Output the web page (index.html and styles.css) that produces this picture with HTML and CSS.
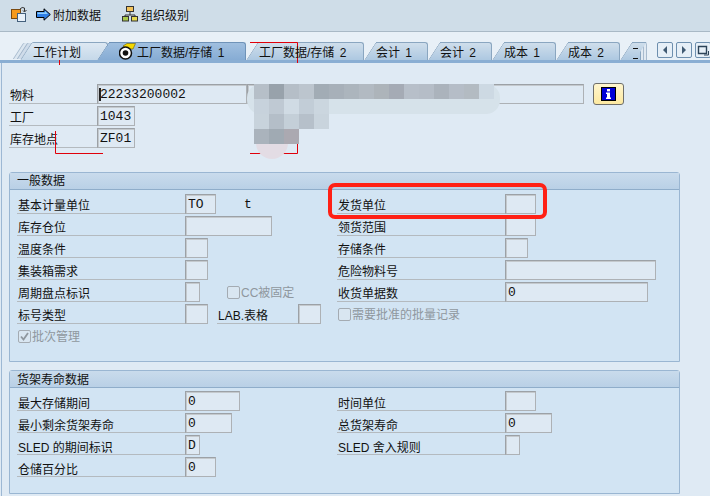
FILE: index.html
```html
<!DOCTYPE html>
<html lang="zh">
<head>
<meta charset="utf-8">
<title>物料</title>
<link rel="stylesheet" href="styles.css">
</head>
<body>
<div class="page">
  <header class="toolbar">
    <svg class="icon-a" width="16" height="16" viewBox="0 0 16 16"><rect x="0.5" y="3.5" width="9" height="9" fill="#f59a1e" stroke="#7a4a10"/><rect x="6.5" y="7.5" width="8" height="8" fill="#e8f1fa" stroke="#44607c"/><path d="M9 3 Q11 0.5 13.5 2 L13.5 5.5 M12 4.5 L13.5 6 L15.5 4" fill="none" stroke="#333" stroke-width="1"/></svg>
    <svg class="icon-b" width="15" height="13" viewBox="0 0 15 13"><path d="M0.5 3.5 H8 V0.8 L14.3 6.5 L8 12.2 V9.5 H0.5 Z" fill="#2f7fe6" stroke="#000"/><path d="M1.5 4.5 H9 V3 L12 6 H1.5 Z" fill="#8fd0ff"/></svg>
    <span class="tool-text">附加数据</span>
    <svg class="icon-c" width="16" height="16" viewBox="0 0 16 16"><path d="M8 5 V9 M3 12 V9 H13 V12" fill="none" stroke="#333"/><rect x="4.5" y="0.5" width="7" height="5" fill="#f3c35a" stroke="#333"/><rect x="0.5" y="10.5" width="6" height="4.5" fill="#a9c94a" stroke="#333"/><rect x="9.5" y="10.5" width="6" height="4.5" fill="#e6d94f" stroke="#333"/></svg>
    <span class="tool-text">组织级别</span>
  </header>

  <nav class="tabstrip">
    <div class="tab tab-plan"><span>工作计划</span></div>
    <div class="tab tab-active">
      <svg class="tab-icon" width="17" height="17" viewBox="0 0 17 17"><path d="M4 3 L8 0.5 H16.5 L14 6 H8 Z" fill="#f5d800" stroke="#6b6000" stroke-width="0.6"/><circle cx="6.5" cy="10" r="6" fill="#fff" stroke="#111" stroke-width="1.5"/><circle cx="6.5" cy="10" r="2.8" fill="#111"/></svg>
      <span>工厂数据/存储 1</span>
    </div>
    <div class="tab tab-plant2"><span>工厂数据/存储 2</span></div>
    <div class="tab tab-std"><span>会计 1</span></div>
    <div class="tab tab-std"><span>会计 2</span></div>
    <div class="tab tab-std"><span>成本 1</span></div>
    <div class="tab tab-std"><span>成本 2</span></div>
    <div class="tab tab-more"><i class="dash"></i><i class="dash"></i></div>
    <div class="scrollers">
      <div class="scroll-btn"><svg width="14" height="14" viewBox="0 0 14 14"><path d="M9 3 V11 L5 7 Z" fill="#405a73"/></svg></div>
      <div class="scroll-btn"><svg width="14" height="14" viewBox="0 0 14 14"><path d="M5 3 V11 L9 7 Z" fill="#405a73"/></svg></div>
      <div class="scroll-btn"><svg width="14" height="14" viewBox="0 0 14 14"><path d="M2.5 3.5 H10.5 V10.5 H2.5 Z" fill="none" stroke="#2c4358" stroke-width="1.4"/><path d="M8 12 H12.5 V8" fill="none" stroke="#2c4358"/></svg></div>
    </div>
  </nav>

  <main class="content">
    <section class="head">
      <div class="head-row">
        <div class="head-label">物料</div>
        <div class="field mono w-material"><b class="caret"></b>22233200002</div>
        <div class="field w-desc"></div>
        <button class="info-btn" type="button" aria-label="i">
          <svg width="15" height="14" viewBox="0 0 15 14"><rect x="0.5" y="0.5" width="14" height="13" fill="#0000d8" stroke="#000"/><rect x="6" y="2" width="3" height="2.4" fill="#fff"/><path d="M5 5.5 H9 V10.5 H10 V12 H5 V10.5 H6 V7 H5 Z" fill="#fff"/></svg>
        </button>
      </div>
      <div class="head-row">
        <div class="head-label">工厂</div>
        <div class="field mono w-38">1043</div>
      </div>
      <div class="head-row">
        <div class="head-label">库存地点</div>
        <div class="field mono w-38">ZF01</div>
      </div>
    </section>

    <section class="group group-general">
      <h2 class="group-title">一般数据</h2>
      <div class="group-body">
        <div class="row">
          <div class="col">
            <div class="label">基本计量单位</div><div class="field mono w-31">TO</div><span class="unit">t</span>
          </div>
          <div class="col col-r">
            <div class="label">发货单位</div><div class="field w-31"></div>
          </div>
        </div>
        <div class="row">
          <div class="col"><div class="label">库存仓位</div><div class="field w-87"></div></div>
          <div class="col col-r"><div class="label">领货范围</div><div class="field w-31"></div></div>
        </div>
        <div class="row">
          <div class="col"><div class="label">温度条件</div><div class="field w-23"></div></div>
          <div class="col col-r"><div class="label">存储条件</div><div class="field w-23"></div></div>
        </div>
        <div class="row">
          <div class="col"><div class="label">集装箱需求</div><div class="field w-23"></div></div>
          <div class="col col-r"><div class="label">危险物料号</div><div class="field w-151"></div></div>
        </div>
        <div class="row">
          <div class="col">
            <div class="label">周期盘点标识</div><div class="field w-15"></div>
            <label class="check check-cc"><i class="box"></i><span>CC被固定</span></label>
          </div>
          <div class="col col-r"><div class="label">收货单据数</div><div class="field mono w-143">0</div></div>
        </div>
        <div class="row">
          <div class="col">
            <div class="label">标号类型</div><div class="field w-23"></div>
            <div class="label label-lab">LAB.表格</div><div class="field w-23"></div>
          </div>
          <div class="col col-r"><label class="check"><i class="box"></i><span>需要批准的批量记录</span></label></div>
        </div>
        <div class="row">
          <div class="col">
            <label class="check">
              <i class="box"><svg width="11" height="11" viewBox="0 0 11 11"><path d="M2 5.5 L4.5 8.5 L9 2" fill="none" stroke="#8f979e" stroke-width="1.8"/></svg></i>
              <span>批次管理</span>
            </label>
          </div>
        </div>
      </div>
    </section>

    <section class="group group-shelf">
      <h2 class="group-title">货架寿命数据</h2>
      <div class="group-body">
        <div class="row">
          <div class="col"><div class="label">最大存储期间</div><div class="field mono w-55">0</div></div>
          <div class="col col-r"><div class="label">时间单位</div><div class="field w-31"></div></div>
        </div>
        <div class="row">
          <div class="col"><div class="label">最小剩余货架寿命</div><div class="field mono w-47">0</div></div>
          <div class="col col-r"><div class="label">总货架寿命</div><div class="field mono w-47">0</div></div>
        </div>
        <div class="row">
          <div class="col"><div class="label">SLED 的期间标识</div><div class="field mono w-15">D</div></div>
          <div class="col col-r"><div class="label">SLED 舍入规则</div><div class="field w-15"></div></div>
        </div>
        <div class="row">
          <div class="col"><div class="label">仓储百分比</div><div class="field mono w-31">0</div></div>
        </div>
      </div>
    </section>
  </main>

  <svg class="overlay" width="710" height="496" viewBox="0 0 710 496">
    <g fill="none" stroke="#e0000a" stroke-width="1">
      <path d="M105 46.5 H59.5 V65"/>
      <path d="M250 42.5 H297.5 V63"/>
      <path d="M55.5 131 V153.5 H103"/>
      <path d="M250 153.5 H297.5 V140"/>
    </g>
    <circle cx="272" cy="143" r="16" fill="#e3dce4"/>
    <rect x="247" y="84" width="253" height="30" rx="14" fill="#d6e2ea"/>
    <g>
      <rect x="254" y="84" width="15" height="15" fill="#b6bfc8"/>
      <rect x="269" y="84" width="15" height="15" fill="#98a2ab"/>
      <rect x="284" y="84" width="15" height="15" fill="#b5bec7"/>
      <rect x="299" y="84" width="15" height="15" fill="#bcc5ce"/>
      <rect x="314" y="84" width="15" height="15" fill="#a2acb5"/>
      <rect x="329" y="84" width="15" height="15" fill="#a7b0b9"/>
      <rect x="344" y="84" width="15" height="15" fill="#acb5bd"/>
      <rect x="359" y="84" width="15" height="15" fill="#b2bac2"/>
      <rect x="374" y="84" width="15" height="15" fill="#adb4ba"/>
      <rect x="389" y="84" width="15" height="15" fill="#a5abb5"/>
      <rect x="404" y="84" width="15" height="15" fill="#b7bfc9"/>
      <rect x="419" y="84" width="15" height="15" fill="#b5bdc7"/>
      <rect x="434" y="84" width="15" height="15" fill="#abb3bc"/>
      <rect x="449" y="84" width="15" height="15" fill="#b5bdc7"/>
      <rect x="464" y="84" width="15" height="15" fill="#b3bbc2"/>
      <rect x="479" y="84" width="15" height="15" fill="#cdd9e3"/>
      <rect x="254" y="99" width="15" height="15" fill="#c7d2dc"/>
      <rect x="269" y="99" width="15" height="15" fill="#bfc9d3"/>
      <rect x="284" y="99" width="15" height="15" fill="#d0dbe4"/>
      <rect x="299" y="99" width="15" height="15" fill="#c2cdd7"/>
      <rect x="314" y="99" width="15" height="15" fill="#cbd6df"/>
      <rect x="254" y="114" width="15" height="15" fill="#c8d3dc"/>
      <rect x="269" y="114" width="15" height="15" fill="#b4bec8"/>
      <rect x="284" y="114" width="15" height="15" fill="#c4cfd8"/>
      <rect x="299" y="114" width="15" height="15" fill="#b6c0ca"/>
      <rect x="314" y="114" width="15" height="15" fill="#c9d4dd"/>
      <rect x="254" y="129" width="15" height="15" fill="#aab3bc"/>
      <rect x="269" y="129" width="15" height="15" fill="#a0aab3"/>
      <rect x="284" y="129" width="15" height="15" fill="#aba9b1"/>
    </g>
    <rect x="330" y="185" width="215" height="32" rx="5" fill="none" stroke="#ff2015" stroke-width="4"/>
  </svg>
</div>
</body>
</html>
```
FILE: styles.css
```css
* { box-sizing: border-box; }
html, body { margin: 0; padding: 0; }
body { width: 710px; height: 496px; overflow: hidden; background: #dfeaf4; }
.page {
  position: relative;
  width: 710px;
  height: 496px;
  overflow: hidden;
  display: flex;
  flex-direction: column;
  font: 12px/16px "Liberation Sans", "Noto Sans CJK SC", sans-serif;
  color: #111;
}

/* toolbar */
.toolbar {
  height: 32px;
  flex: none;
  display: flex;
  align-items: center;
  padding-left: 11px;
  background: #cfdde8;
  border-bottom: 1px solid #a9b9c6;
}
.icon-a { margin-top: -3px; }
.icon-b { margin-left: 9px; margin-top: -2px; }
.tool-text { margin-left: 2px; }
.icon-c { margin-left: 21px; margin-top: -3px; margin-right: 1px; }

/* tabs */
.tabstrip {
  height: 31px;
  flex: none;
  display: flex;
  align-items: flex-start;
  padding-top: 10px;
  padding-left: 12px;
  background: #e8f0f7;
  border-bottom: 3px solid #8aaed3;
  position: relative;
}
.tab {
  position: relative;
  height: 18px;
  flex: none;
  display: flex;
  align-items: center;
  color: #111;
  word-spacing: 2px;
}
.tab::before {
  content: "";
  position: absolute;
  top: 0; bottom: 0; right: 0; left: 12px;
  background: linear-gradient(#cfdeeb, #adc8e1);
  border: 1px solid #8aa6c0;
  border-bottom: 0;
  border-left: 0;
  border-radius: 0 3px 0 0;
}
.tab::after {
  content: "";
  position: absolute;
  top: 0; bottom: 0; left: 6px; width: 14px;
  background: linear-gradient(#cfdeeb, #adc8e1);
  border-left: 1px solid #8aa6c0;
  border-top: 1px solid #8aa6c0;
  transform: skewX(-33deg);
  border-radius: 2px 0 0 0;
}
.tab > * { position: relative; z-index: 1; }
.tab > span { padding-top: 4px; }
.tab-plan { width: 96px; padding-left: 21px; z-index: 1; }
.tab-plan::before { left: 22px; background: linear-gradient(#dde8f2, #c5d8e9); }
.tab-plan::after {
  left: 14px;
  background: linear-gradient(#dde8f2, #c5d8e9);
  box-shadow: -4px 0 0 -1px #cfdcea, -5px 0 0 -1px #9fb3c8, -8px 0 0 -1px #dbe6f0, -9px 0 0 -1px #a8bbce;
}
.tab-active {
  width: 149px;
  margin-left: -11px;
  padding-left: 22px;
  z-index: 3;
}
.tab-active::before { background: linear-gradient(#a0bfdf, #86acd4); border-color: #6f93b8; }
.tab-active::after { background: linear-gradient(#a0bfdf, #86acd4); border-color: #6f93b8; }
.tab-icon { position: absolute !important; left: 22px; top: 1px; }
.tab-active > span { margin-left: 18px; }
.tab-plant2 { width: 118px; padding-left: 13px; }
.tab-std { width: 64px; padding-left: 12px; }
.tab-more { width: 26px; margin-right: 11px; }
.tab-more::before {
  right: 5px;
  left: 12px;
  box-shadow: 2px 0 0 #e0e9f2, 3px 0 0 #a8bbce, 5px 0 0 #e0e9f2, 6px 0 0 #a8bbce;
}
.dash {
  position: absolute !important;
  left: 13px;
  width: 5px;
  height: 1px;
  background: #111;
}
.dash:first-of-type { top: 6px; }
.dash:last-of-type { top: 16px; }
.scrollers { display: flex; gap: 3px; flex: none; }
.scroll-btn {
  width: 16px;
  height: 16px;
  flex: none;
  background: #e6eff7;
  border: 1px solid #6e8fae;
  border-radius: 2px;
  display: flex;
}

/* content */
.content {
  flex: 1;
  background: #dfeaf4;
  border-left: 1px solid #9db8d4;
  margin-left: 1px;
  padding: 21px 0 0 7px;
}
.head { height: 66px; }
.head-row { height: 22px; display: flex; align-items: flex-start; }
.head-label {
  width: 88px;
  height: 20px;
  padding: 4px 0 0 1px;
  border-bottom: 1px solid #b4babf;
  flex: none;
}
.caret {
  position: absolute;
  left: 1px; top: 3px;
  width: 2px; height: 13px;
  background: #222;
}
.info-btn {
  width: 31px;
  height: 22px;
  margin: -1px 0 0 9px;
  padding: 0;
  display: flex;
  align-items: center;
  justify-content: center;
  border: 1px solid #6f6f6a;
  border-radius: 3px;
  background: linear-gradient(#fff6cf, #fde9a0);
  flex: none;
}

.field {
  position: relative;
  height: 20px;
  flex: none;
  border: 1px solid;
  border-color: #9ca1a6 #adb1b5 #adb1b5 #9ca1a6;
  box-shadow: inset 1px 1px 0 #c4c9cd;
  background: #dee9f3;
  padding-left: 2px;
}
.mono { font: 13px/17px "Liberation Mono", monospace; color: #111; padding-top: 1px; }
.w-material { width: 150px; }
.w-desc { width: 337px; }
.w-38 { width: 38px; }
.w-15 { width: 15px; }
.w-23 { width: 23px; }
.w-31 { width: 31px; }
.w-47 { width: 47px; }
.w-55 { width: 55px; }
.w-87 { width: 87px; }
.w-143 { width: 143px; }
.w-151 { width: 151px; }

/* groups */
.group {
  width: 671px;
  background: #d2e4f3;
  border: 1px solid #9ab6d2;
  border-radius: 3px 3px 0 0;
}
.group-general { height: 190px; margin-top: 22px; }
.group-shelf { height: 124px; margin-top: 8px; }
.group-title {
  margin: 0;
  height: 17px;
  padding: 0 0 0 7px;
  font-weight: 400;
  font-size: 12px;
  line-height: 17px;
  background: linear-gradient(#c9dbec, #b9d0e6);
  border-bottom: 1px solid #8fadca;
}
.group-shelf .group-title { line-height: 19px; }
.group-body { padding: 4px 0 0 7px; }
.group-shelf .group-body { padding-top: 3px; }
.row { display: flex; height: 22px; }
.col { width: 320px; flex: none; display: flex; align-items: flex-start; position: relative; }
.col-r { width: 319px; }
.label {
  width: 168px;
  height: 20px;
  flex: none;
  padding: 4px 0 0 1px;
  border-bottom: 1px solid #b4babf;
  white-space: nowrap;
}
.group-shelf .label { padding-top: 5px; }
.unit { margin-left: 28px; margin-top: 2px; font: 13px/17px "Liberation Mono", monospace; }
.label-lab { width: 81px; margin-left: 9px; padding-left: 1px; }
.check {
  display: flex;
  align-items: center;
  height: 20px;
  color: #8f979e;
  white-space: nowrap;
}
.check > span { padding-top: 2px; }
.check-cc { margin-left: 26px; }
.box {
  display: flex;
  width: 13px;
  height: 13px;
  border: 1px solid #a4abb2;
  border-radius: 2px;
  background: #d9e6f1;
  margin: 0 1px 0 1px;
}
.overlay { position: absolute; left: 0; top: 0; pointer-events: none; }
```
